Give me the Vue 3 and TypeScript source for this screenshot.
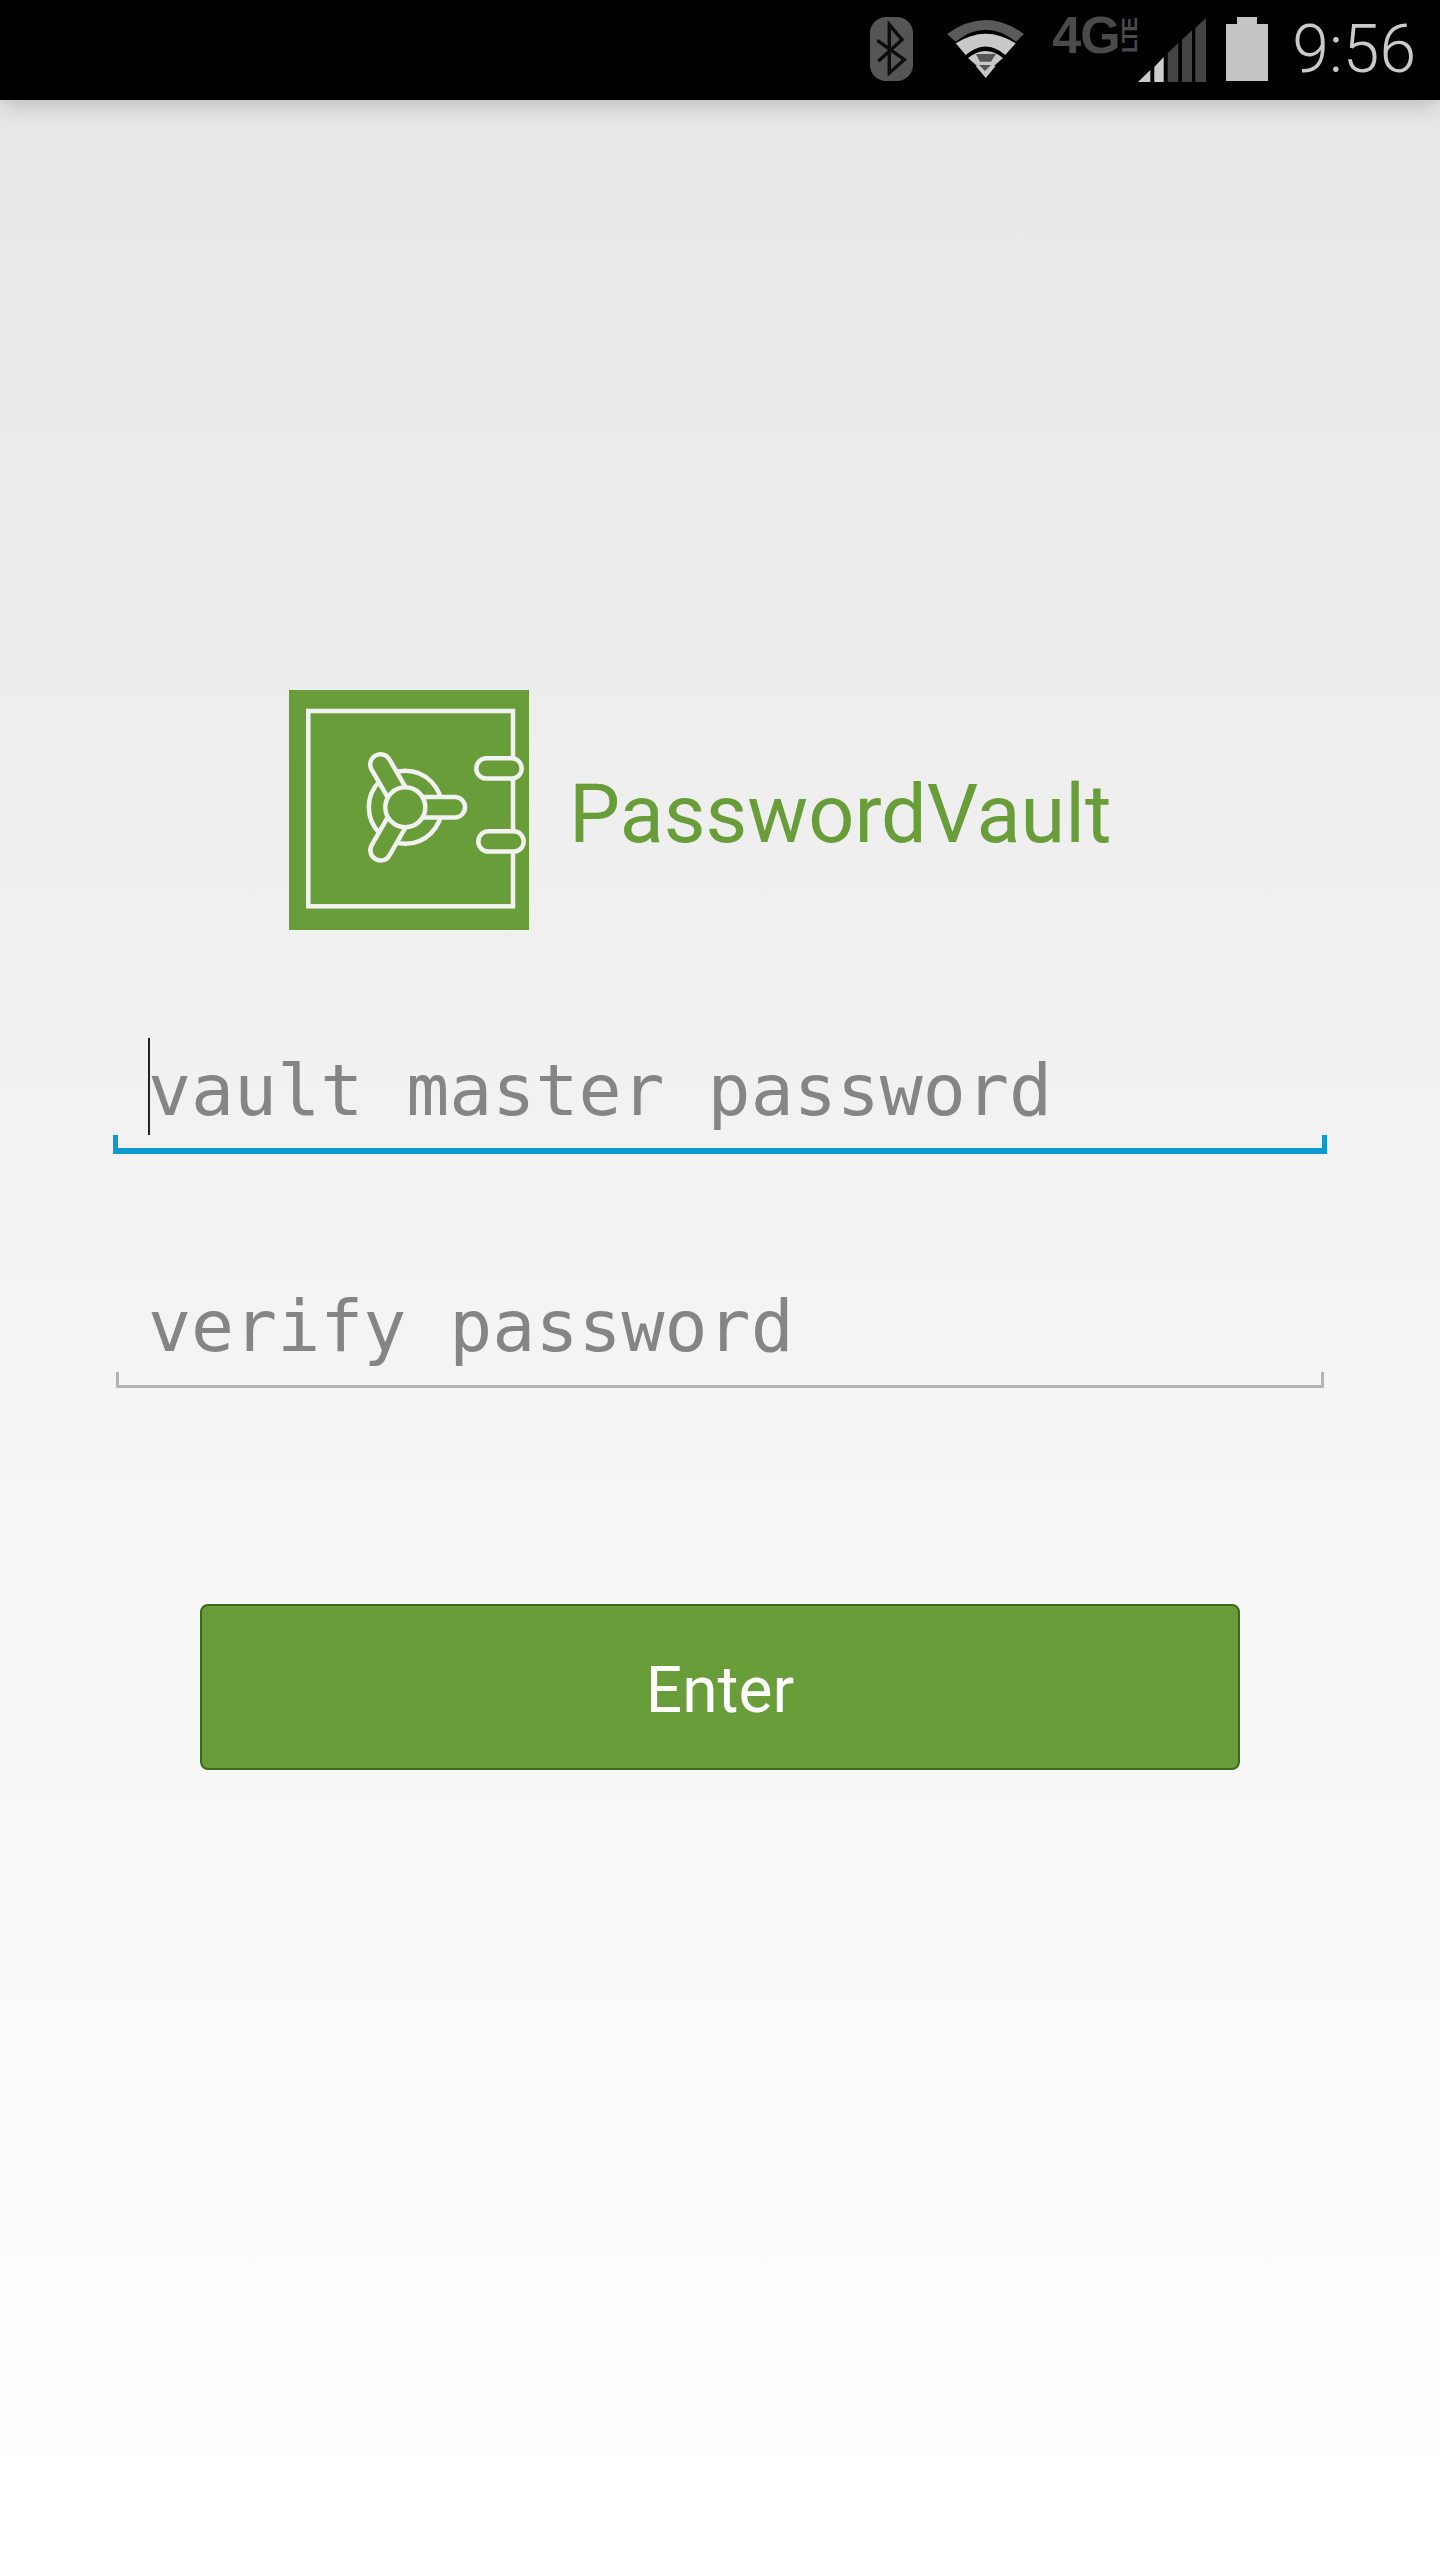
<template>
  <div class="screen">
    <div class="status-bar">
      <svg class="ic-bt" width="43" height="64" viewBox="0 0 43 64">
        <rect width="43" height="64" rx="16" fill="#555" />
        <path d="M8.3 44.3 L32 22.7 L19.3 7.7 V56 L34.3 42.7 L7.3 23.3" fill="none" stroke="#0c0c0c" stroke-width="3.4" />
      </svg>
      <svg class="ic-wifi" width="77" height="58" viewBox="0 0 77 58">
        <path d="M0 14 Q38.7 -14 77 14 L69 21.7 Q38.7 -2 8.7 21.7Z" fill="#5a5a5a" />
        <path d="M8.7 23.3 Q38.7 4 68.7 23.3 L58.3 35 Q38.7 18 18.7 35Z" fill="#c8c8c8" />
        <path d="M21 38 Q38.7 24 56 38 L47 46 H30Z" fill="#c8c8c8" />
        <path d="M29 34 H49 L44 41.7 H33Z" fill="#555" />
        <path d="M28.7 46 H48.7 L38.7 58Z" fill="#c8c8c8" />
        <path d="M32 45 H44 L38 51Z" fill="#555" />
      </svg>
      <div class="ic-net">
        <span class="net-4g">4G</span>
        <span class="net-lte">LTE</span>
      </div>
      <svg class="ic-signal" width="68" height="64" viewBox="0 0 68 64">
        <path d="M0 64 L12.3 52 V64Z" fill="#ccc" />
        <path d="M16.3 49 L25.7 39 V64 H16.3Z" fill="#ccc" />
        <path d="M29.7 35 L40.3 25 V64 H29.7Z" fill="#444" />
        <path d="M44 21.7 L54 12.3 V64 H44Z" fill="#444" />
        <path d="M57.3 10 L68 0 V64 H57.3Z" fill="#444" />
      </svg>
      <div class="ic-battery">
        <div class="bat-nub"></div>
        <div class="bat-body"></div>
      </div>
      <span class="clock">9:56</span>
    </div>

    <div class="content">
      <div class="brand">
        <svg class="logo" width="240" height="240" viewBox="0 0 240 240">
          <rect width="240" height="240" fill="#699d39" />
          <g fill="#699d39" stroke="#f2f2f2" stroke-width="4.5">
            <rect x="19.3" y="21" width="204.7" height="195.3" />
            <rect x="187.3" y="68.3" width="45.4" height="20.2" rx="10.1" />
            <rect x="189.3" y="141.3" width="45.4" height="20.2" rx="10.1" />
            <circle cx="116.3" cy="117.3" r="36.5" />
            <rect x="124" y="107" width="52" height="20.5" rx="10.2" />
            <rect x="124" y="107" width="52" height="20.5" rx="10.2" transform="rotate(120 116.3 117.3)" />
            <rect x="124" y="107" width="52" height="20.5" rx="10.2" transform="rotate(240 116.3 117.3)" />
            <circle cx="116.3" cy="117.3" r="20" />
          </g>
        </svg>
        <span class="brand-name">PasswordVault</span>
      </div>

      <div class="field focused">
        <input class="pw-input" type="password" placeholder="vault master password" />
        <i class="caret"></i>
      </div>
      <div class="field">
        <input class="pw-input" type="password" placeholder="verify password" />
      </div>

      <button class="enter-btn" type="button">Enter</button>
    </div>
  </div>
</template>

<script setup lang="ts">
</script>

<style>
html, body { margin: 0; padding: 0; }
</style>

<style scoped>
.screen {
  width: 1440px;
  height: 2560px;
  display: flex;
  flex-direction: column;
  background: linear-gradient(180deg, #e8e8e8 100px, #ffffff 2500px);
  font-family: Roboto, "Liberation Sans", sans-serif;
  overflow: hidden;
}
.status-bar {
  height: 100px;
  flex-shrink: 0;
  background: #000;
  display: flex;
  align-items: flex-start;
  padding-right: 24px;
  box-sizing: border-box;
  justify-content: flex-end;
  box-shadow: 0 4px 24px rgba(0, 0, 0, 0.22);
  position: relative;
}
.ic-bt { margin-top: 17px; margin-right: 34px; }
.ic-wifi { margin-top: 20px; margin-right: 28px; }
.ic-net {
  width: 87px;
  height: 36px;
  margin-top: 17px;
  margin-right: -1px;
  display: flex;
  align-items: flex-start;
  justify-content: space-between;
  color: #4a4a4a;
}
.net-4g { font: bold 52px/36px "Liberation Sans", sans-serif; letter-spacing: -1px; }
.net-lte {
  font: bold 22px/18px "Liberation Sans", sans-serif;
  letter-spacing: -2px;
  height: 36px;
  writing-mode: vertical-rl;
  transform: rotate(180deg);
}
.ic-signal { margin-top: 18px; margin-right: 20px; }
.ic-battery { width: 42px; margin-top: 17px; margin-right: 24px; display: flex; flex-direction: column; align-items: center; }
.bat-nub { width: 20px; height: 7px; background: #c4c4c4; }
.bat-body { width: 42px; height: 57px; background: #c4c4c4; }
.clock { font-size: 66px; line-height: 100px; font-weight: 300; color: #cacaca; }

.content {
  display: flex;
  flex-direction: column;
  padding-top: 590px;
}
.brand {
  display: flex;
  align-items: center;
  padding-left: 289px;
  gap: 40px;
}
.brand-name { font-size: 81px; color: #699d39; line-height: 1; padding-top: 8px; }
.field {
  position: relative;
  width: 1208px;
  height: 130px;
  margin-left: 116px;
  margin-top: 104px;
  box-sizing: border-box;
  border-bottom: 3px solid #b4b4b4;
}
.field::before,
.field::after {
  content: "";
  position: absolute;
  bottom: 0;
  width: 3px;
  height: 13px;
  background: #b4b4b4;
}
.field::before { left: 0; }
.field::after { right: 0; }
.field.focused {
  width: 1214px;
  margin-left: 113px;
  margin-top: 94px;
  border-bottom: 6px solid #0d9ad0;
}
.field.focused::before,
.field.focused::after { width: 5px; background: #0d9ad0; }
.pw-input {
  display: block;
  width: 100%;
  height: 100%;
  padding: 10px 0 0 32px;
  box-sizing: border-box;
  border: none;
  outline: none;
  background: transparent;
  font-family: "DejaVu Sans Mono", monospace;
  font-size: 71.5px;
  color: #222;
}
.focused .pw-input { padding: 8px 0 0 35px; }
.pw-input::placeholder { color: #858585; opacity: 1; }
.caret {
  position: absolute;
  left: 35px;
  top: 14px;
  width: 2px;
  height: 97px;
  background: #222;
}
.enter-btn {
  width: 1040px;
  height: 166px;
  margin-left: 200px;
  margin-top: 216px;
  box-sizing: border-box;
  background: #699d39;
  border: 2px solid #3c6b1f;
  border-radius: 8px;
  color: #fff;
  font-family: Roboto, "Liberation Sans", sans-serif;
  font-size: 64px;
  padding: 6px 0 0;
}
</style>
